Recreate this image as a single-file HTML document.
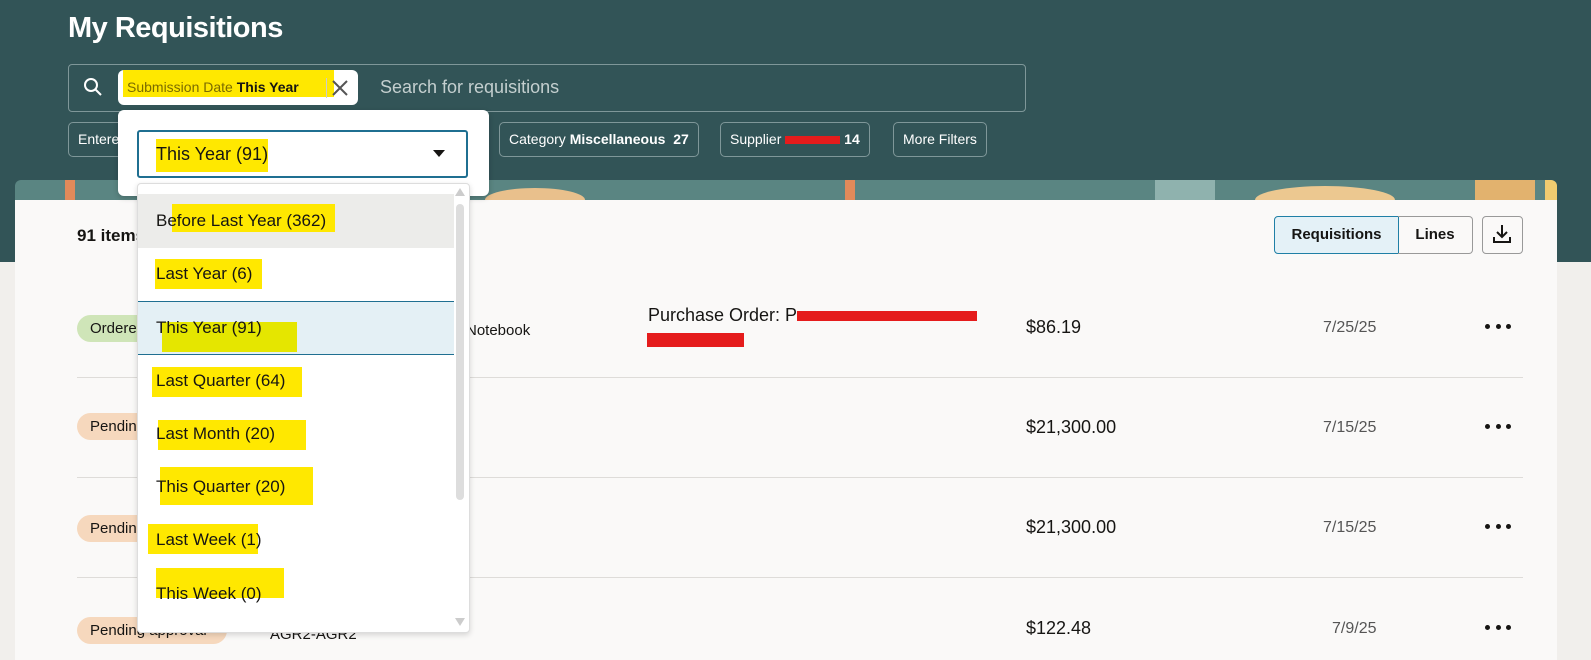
<!DOCTYPE html>
<html><head><style>
*{box-sizing:border-box;margin:0;padding:0}
body{width:1591px;height:646px;overflow:hidden;background:#f1efec;font-family:"Liberation Sans",sans-serif;position:relative;color:#161513}
.hdr{position:absolute;left:0;top:0;width:1591px;height:262px;background:#325457}
.title{position:absolute;left:68px;top:12px;font-size:29px;font-weight:bold;color:#fff;letter-spacing:-0.5px}
.search{position:absolute;left:68px;top:64px;width:958px;height:48px;border:1px solid #7f9799;border-radius:4px}
.chip{position:absolute;left:118px;top:70px;width:240px;height:35px;background:#fff;border-radius:6px}
.hl{background:#ffe800;position:absolute}
.fbtn{position:absolute;top:122px;height:35px;border:1px solid #7f9799;border-radius:5px;color:#fff;font-size:14px;line-height:33px;padding:0 9px;white-space:nowrap}
.card{position:absolute;left:15px;top:200px;width:1542px;height:460px;background:#faf9f8}
.banner{position:absolute;left:15px;top:180px;width:1542px;height:20px;border-radius:6px 6px 0 0;overflow:hidden;background:#5a8582}
.row{position:absolute;left:77px;width:1446px;border-top:1px solid #dedcd9}
.pill{position:absolute;left:77px;height:27px;border-radius:14px;font-size:15px;line-height:27px;padding-left:13px;width:150px}
.amt{position:absolute;left:1026px;font-size:18px}
.date{position:absolute;left:1323px;font-size:16px;color:#555}
.dots{position:absolute;left:1485px;width:26px;height:6px;display:flex;justify-content:space-between}
.dots i{width:5px;height:5px;border-radius:50%;background:#161513;display:block}
.pop{position:absolute;left:118px;top:110px;width:371px;height:86px;background:#fff;border-radius:6px;box-shadow:0 2px 6px rgba(0,0,0,.2)}
.sel{position:absolute;left:137px;top:130px;width:331px;height:48px;border:2px solid #1f6f91;border-radius:3px;background:#fff}
.list{position:absolute;left:137px;top:183px;width:333px;height:450px;background:#fff;border:1px solid #ddd;border-radius:4px;box-shadow:0 2px 6px rgba(0,0,0,.15);overflow:hidden}
.it{position:absolute;left:0;width:316px;height:54px;font-size:17px;line-height:54px;padding-left:18px}
</style></head><body>
<div class="hdr"></div>
<div class="title">My Requisitions</div>
<div class="search"></div>
<svg style="position:absolute;left:83px;top:77px" width="20" height="20" viewBox="0 0 20 20"><circle cx="8" cy="8" r="6" fill="none" stroke="#fff" stroke-width="2"/><path d="M12.5 12.5L18 18" stroke="#fff" stroke-width="2"/></svg>
<div class="chip"></div>
<div class="hl" style="left:123px;top:70px;width:211px;height:27px"></div>
<div style="position:absolute;left:127px;top:79px;font-size:14px;color:#7a6b00">Submission Date <b style="color:#161513">This Year</b></div>
<div style="position:absolute;left:326px;top:78px;width:1px;height:20px;background:#ccc"></div>
<svg style="position:absolute;left:332px;top:80px" width="16" height="16"><path d="M1 1L15 15M15 1L1 15" stroke="#555" stroke-width="2"/></svg>
<div style="position:absolute;left:380px;top:77px;font-size:18px;color:#c4cfcf">Search for requisitions</div>
<div class="fbtn" style="left:68px;width:60px">Entered</div>
<div class="fbtn" style="left:499px">Category <b>Miscellaneous</b>&nbsp; <b>27</b></div>
<div class="fbtn" style="left:720px">Supplier <span style="display:inline-block;width:55px;height:8px;background:#e51c1c;vertical-align:middle"></span> <b>14</b></div>
<div class="fbtn" style="left:893px">More Filters</div>
<div class="banner"><svg width="1542" height="20"><rect x="50" y="0" width="10" height="20" fill="#e08a5a"/><rect x="300" y="0" width="120" height="20" fill="#c4d6d3"/><ellipse cx="520" cy="20" rx="50" ry="12" fill="#e9c08c"/><rect x="830" y="0" width="10" height="20" fill="#e08a5a"/><ellipse cx="1310" cy="20" rx="70" ry="14" fill="#ecc890"/><rect x="1140" y="0" width="60" height="20" fill="#8fb2ae"/><rect x="1460" y="0" width="60" height="20" fill="#e2b26e"/><rect x="1530" y="0" width="12" height="20" fill="#f0cc70"/></svg></div>
<div class="card"></div>
<div style="position:absolute;left:77px;top:226px;font-size:17px;font-weight:bold">91 items</div>
<div style="position:absolute;left:1274px;top:216px;width:125px;height:38px;border:1px solid #1f7fa6;border-radius:4px 0 0 4px;background:#e4f1f7;font-size:15px;font-weight:bold;text-align:center;line-height:36px">Requisitions</div>
<div style="position:absolute;left:1398px;top:216px;width:75px;height:38px;border:1px solid #999;border-left:none;border-radius:0 4px 4px 0;font-size:15px;font-weight:bold;text-align:center;line-height:36px">Lines</div>
<div style="position:absolute;left:1482px;top:216px;width:41px;height:38px;border:1px solid #999;border-radius:4px"></div>
<svg style="position:absolute;left:1492px;top:224px" width="20" height="20"><path d="M10 1V13M5 8L10 13L15 8M2 13V18H18V13" fill="none" stroke="#161513" stroke-width="2"/></svg>
<div class="row" style="top:377px"></div><div class="row" style="top:477px"></div><div class="row" style="top:577px"></div>
<div class="pill" style="top:315px;background:#cfe5b8">Ordered</div>
<div class="pill" style="top:413px;background:#f6d8bd">Pending</div>
<div class="pill" style="top:515px;background:#f6d8bd">Pending</div>
<div class="pill" style="top:617px;background:#f6d8bd">Pending approval</div>
<div style="position:absolute;left:466px;top:322px;font-size:15px">Notebook</div>
<div style="position:absolute;left:270px;top:626px;font-size:15px">AGR2-AGR2</div>
<div style="position:absolute;left:648px;top:305px;font-size:18px">Purchase Order: P<span style="display:inline-block;width:180px;height:10px;background:#e51c1c;vertical-align:middle"></span></div>
<div style="position:absolute;left:647px;top:333px;width:97px;height:14px;background:#e51c1c"></div>
<div class="amt" style="top:317px">$86.19</div><div class="date" style="top:319px">7/25/25</div><div class="dots" style="top:324px"><i></i><i></i><i></i></div>
<div class="amt" style="top:417px">$21,300.00</div><div class="date" style="top:419px">7/15/25</div><div class="dots" style="top:424px"><i></i><i></i><i></i></div>
<div class="amt" style="top:517px">$21,300.00</div><div class="date" style="top:519px">7/15/25</div><div class="dots" style="top:524px"><i></i><i></i><i></i></div>
<div class="amt" style="top:618px">$122.48</div><div class="date" style="top:620px;left:1332px">7/9/25</div><div class="dots" style="top:625px"><i></i><i></i><i></i></div>
<div class="pop"></div>
<div class="sel"></div>
<div class="hl" style="left:156px;top:139px;width:112px;height:33px"></div>
<div style="position:absolute;left:156px;top:144px;font-size:18px">This Year (91)</div>
<svg style="position:absolute;left:433px;top:150px" width="12" height="7"><path d="M0 0H12L6 7Z" fill="#161513"/></svg>
<div class="list">
<div class="it" style="top:10px;background:#ececea"></div>
<div class="it" style="top:117px;height:54px;background:#e4f0f5;border-top:1px solid #1f6f91;border-bottom:1px solid #1f6f91"></div>
<div class="hl" style="left:34px;top:20px;width:163px;height:28px"></div>
<div class="hl" style="left:17px;top:75px;width:107px;height:30px"></div>
<div class="hl" style="left:24px;top:138px;width:135px;height:30px;background:#e5e600"></div>
<div class="hl" style="left:14px;top:183px;width:150px;height:30px"></div>
<div class="hl" style="left:20px;top:236px;width:148px;height:30px"></div>
<div class="hl" style="left:22px;top:283px;width:153px;height:38px"></div>
<div class="hl" style="left:10px;top:340px;width:110px;height:30px"></div>
<div class="hl" style="left:18px;top:384px;width:128px;height:30px"></div>
<div class="it" style="top:10px">Before Last Year (362)</div>
<div class="it" style="top:63px">Last Year (6)</div>
<div class="it" style="top:117px">This Year (91)</div>
<div class="it" style="top:170px">Last Quarter (64)</div>
<div class="it" style="top:223px">Last Month (20)</div>
<div class="it" style="top:276px">This Quarter (20)</div>
<div class="it" style="top:329px">Last Week (1)</div>
<div class="it" style="top:383px">This Week (0)</div>
<div style="position:absolute;left:318px;top:20px;width:8px;height:296px;background:#ddd;border-radius:4px"></div>
<svg style="position:absolute;left:317px;top:4px" width="10" height="8"><path d="M0 8L5 0L10 8Z" fill="#ccc"/></svg>
<svg style="position:absolute;left:317px;top:434px" width="10" height="8"><path d="M0 0L5 8L10 0Z" fill="#ccc"/></svg>
</div>
</body></html>
